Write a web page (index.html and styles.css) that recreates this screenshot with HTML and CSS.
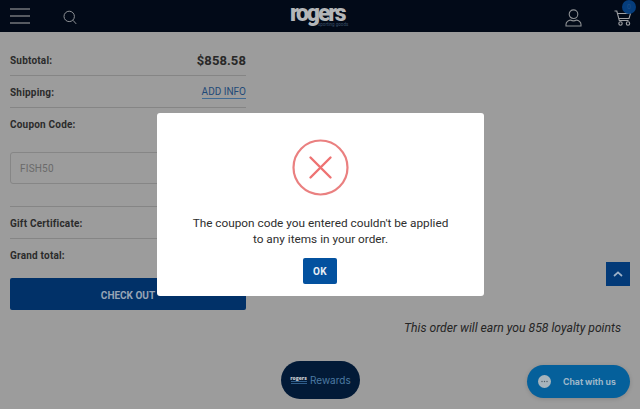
FILE: index.html
```html
<!DOCTYPE html>
<html lang="en">
<head>
<meta charset="utf-8">
<title>Checkout</title>
<link rel="stylesheet" href="styles.css">
</head>
<body>
<header class="topbar">
  <div class="topbar-left">
    <svg class="icon-menu" width="20" height="16" viewBox="0 0 20 16"><path d="M0 1h20M0 8h20M0 15h20" stroke="#a9a9a9" stroke-width="1.2" fill="none"/></svg>
    <svg class="icon-search" width="14" height="15" viewBox="0 0 14 15"><circle cx="6.2" cy="6.4" r="5.2" stroke="#8f9296" stroke-width="1" fill="none"/><path d="M10 10.3l3.2 3.6" stroke="#8f9296" stroke-width="1" fill="none"/></svg>
  </div>
  <div class="logo"><span class="logo-word">rogers</span><span class="logo-sub">sporting goods</span></div>
  <div class="topbar-right">
    <svg class="icon-user" width="17" height="18" viewBox="0 0 17 18"><circle cx="8.5" cy="5.2" r="4.3" stroke="#8e9194" stroke-width="1.1" fill="none"/><path d="M1 17v-1.5c0-2.6 2.6-4.2 4.4-4.4 2 1 4.2 1 6.2 0 1.8.2 4.4 1.8 4.4 4.4V17z" stroke="#8e9194" stroke-width="1.1" fill="none"/></svg>
    <div class="cart">
      <svg width="17" height="16" viewBox="0 0 17 16"><path d="M.5 1h2.3l2.5 9.500h9.200M3.500 3.500h13l-1.500 5H5" stroke="#a0a2a5" stroke-width="1.1" fill="none"/><circle cx="6.5" cy="13.5" r="1.7" stroke="#a0a2a5" stroke-width="1.1" fill="none"/><circle cx="14" cy="13.5" r="1.7" stroke="#a0a2a5" stroke-width="1.1" fill="none"/></svg>
      <span class="cart-badge">0</span>
    </div>
  </div>
</header>

<main class="page">
  <section class="summary">
    <div class="row row-sub"><span class="label">Subtotal:</span><span class="amount">$858.58</span></div>
    <div class="row"><span class="label">Shipping:</span><a class="link">ADD INFO</a></div>
    <div class="coupon">
      <span class="label">Coupon Code:</span>
      <div class="input">FISH50</div>
    </div>
    <div class="row"><span class="label">Gift Certificate:</span></div>
    <div class="row row-plain"><span class="label">Grand total:</span></div>
    <div class="checkout">CHECK OUT</div>
  </section>
  <p class="loyalty">This order will earn you 858 loyalty points</p>
</main>

<div class="to-top"><svg width="10" height="6" viewBox="0 0 10 6"><path d="M1 5l4-3.600L9 5" stroke="#9fb2c8" stroke-width="1.7" fill="none"/></svg></div>

<div class="rewards"><span class="rewards-logo"><b>rogers</b><i></i><i></i></span><span>Rewards</span></div>
<div class="chat">
  <svg width="13" height="13" viewBox="0 0 13 13"><circle cx="6.5" cy="6.5" r="6.5" fill="#a7b4bc"/><circle cx="4" cy="6.5" r=".7" fill="#4c5a64"/><circle cx="6.5" cy="6.5" r=".7" fill="#4c5a64"/><circle cx="9" cy="6.5" r=".7" fill="#4c5a64"/></svg>
  <span>Chat with us</span>
</div>

<div class="modal">
  <svg class="err" width="57" height="57" viewBox="0 0 57 57"><circle cx="28.5" cy="28.5" r="27" stroke="#ea8080" stroke-width="2.2" fill="none"/><path d="M18.5 18.5l20 20M38.500 18.500l-20 20" stroke="#ee7272" stroke-width="2.4" stroke-linecap="round" fill="none"/></svg>
  <p class="msg">The coupon code you entered couldn't be applied<br>to any items in your order.</p>
  <div class="ok">OK</div>
</div>
</body>
</html>
```
FILE: styles.css
```css
* { box-sizing: border-box; }
html, body { margin: 0; height: 409px; overflow: hidden; }
body { background: #9c9c9c; font-family: Roboto, "Liberation Sans", sans-serif; color: #2c2c2c; position: relative; }

.topbar { height: 32px; background: #020a18; display: flex; justify-content: space-between; align-items: center; position: relative; }
.topbar-left { display: flex; align-items: center; gap: 33px; padding-left: 10px; }
.icon-search { margin-top: 3px; }
.logo { position: absolute; left: 290px; top: 5px; width: 66px; height: 24px; color: #b4b6b8; }
.logo-word { display: block; font: 900 23px/17px Roboto, sans-serif; letter-spacing: -2.2px; }
.logo-sub { position: absolute; left: 28px; top: 17px; font-size: 4.5px; line-height: 5px; color: #3b5068; white-space: nowrap; }
.topbar-right { display: flex; align-items: center; gap: 32px; padding-right: 9px; }
.icon-user { margin-top: 3px; }
.cart { position: relative; width: 17px; height: 16px; margin-top: 4px; }
.cart-badge { position: absolute; left: 8px; top: -10px; width: 14px; height: 14px; border-radius: 50%; background: #053d7c; color: #1d4f88; font-size: 7px; line-height: 14px; text-align: center; }

.page { padding: 0 19px 0 10px; }
.summary { width: 236px; display: flex; flex-direction: column; }
.row { height: 32px; padding-top: 1px; display: flex; justify-content: space-between; align-items: center; border-bottom: 1px solid #858585; }
.row-sub { height: 44px; padding-top: 13px; }
.row-plain { border-bottom: 0; }
.label { font-size: 10px; font-weight: 700; letter-spacing: .2px; color: #2b2b2b; }
.amount { font-size: 13px; font-weight: 700; letter-spacing: .1px; color: #282828; }
.link { font-size: 10px; color: #1f4a78; border-bottom: 1px solid #3f6a94; line-height: 12px; }
.coupon { height: 99px; padding-top: 11px; border-bottom: 1px solid #858585; }
.coupon .label { display: block; line-height: 12px; }
.input { margin-top: 21px; height: 32px; border: 1px solid #868686; border-radius: 3px; padding-left: 9px; display: flex; align-items: center; font-size: 10px; letter-spacing: .2px; color: #6a6a6a; }
.checkout { margin-top: 7px; height: 32px; padding-top: 3px; border-radius: 2px; background: #013168; color: #97a4b5; font-size: 10px; font-weight: 700; display: flex; align-items: center; justify-content: center; }
.loyalty { margin: 11px 0 0; text-align: right; font-size: 12.2px; font-style: italic; line-height: 14px; color: #252525; }

.to-top { position: absolute; left: 606px; top: 262px; width: 24px; height: 24px; background: #033a78; display: flex; align-items: center; justify-content: center; }

.rewards { position: absolute; left: 281px; top: 361px; width: 79px; height: 38px; border-radius: 19px; background: #021a37; display: flex; align-items: center; gap: 3px; padding-left: 9px; color: #4d7ba3; font: 400 10px Inter, sans-serif; }
.rewards-logo { width: 17px; display: flex; flex-direction: column; gap: 1px; align-items: center; }
.rewards-logo b { font: 800 5px/4px "Open Sans", sans-serif; color: #c8ccd0; }
.rewards-logo i { display: block; width: 16px; height: 1px; background: #2f5d8a; }

.chat { position: absolute; left: 527px; top: 365px; width: 103px; height: 33px; border-radius: 17px; background: #05609b; display: flex; align-items: center; gap: 12px; padding-left: 11px; color: #9db7c9; font: 700 8.7px Inter, sans-serif; box-shadow: 0 1px 4px rgba(0,0,0,.15); }

.modal { position: absolute; left: 157px; top: 113px; width: 327px; height: 183px; background: #fff; border-radius: 3px; display: flex; flex-direction: column; align-items: center; padding-top: 26px; }
.msg { margin: 19px 0 0; text-align: center; font-size: 11.8px; line-height: 16px; color: #2e2e2e; }
.ok { margin-top: 11px; margin-right: 1px; width: 34px; height: 26px; border-radius: 2px; background: #03519f; color: #e8eef5; font-size: 10px; font-weight: 700; letter-spacing: .3px; display: flex; align-items: center; justify-content: center; }
```
